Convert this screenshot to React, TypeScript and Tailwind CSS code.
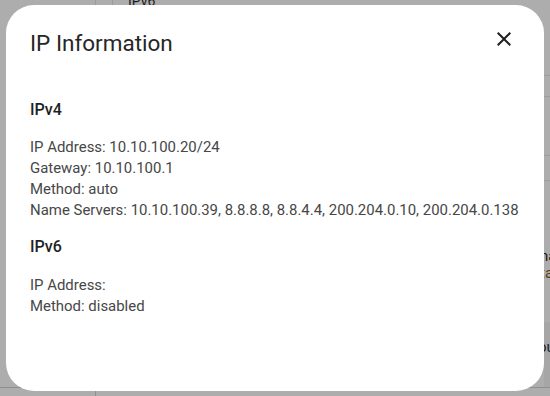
import React from "react";

const Line = ({ children }: { children: React.ReactNode }) => (
  <div className="whitespace-nowrap text-[14.95px] leading-[21px] text-[#474747]">{children}</div>
);

const Section = ({ title, lines, gap }: { title: string; lines: string[]; gap: string }) => (
  <div className="flex flex-col">
    <div className="text-[16px] leading-[24px] font-medium text-[#1f1f1f]">{title}</div>
    <div className={`flex flex-col ${gap}`}>
      {lines.map((l) => (
        <Line key={l}>{l}</Line>
      ))}
    </div>
  </div>
);

export default function App() {
  return (
    <div
      className="relative w-[550px] h-[396px] overflow-hidden bg-[#adadad] pt-[5px] pl-[6px]"
      style={{ fontFamily: "Roboto, 'Noto Sans', sans-serif" }}
    >
      {/* page behind the scrim */}
      <div className="absolute inset-0">
        <div className="absolute left-[95px] top-0 h-[14px] w-px bg-[#9a9a9a]" />
        <div className="absolute left-[112px] top-0 h-[14px] w-px bg-[#9a9a9a]" />
        <div className="absolute left-[128px] top-[-9px] text-[14px] text-[#1c1c1c]">IPv6</div>
        <div className="absolute left-[95px] top-[382px] h-[14px] w-px bg-[#8f8f8f]" />
        <div className="absolute left-[544px] top-[75px] h-px w-[6px] bg-[#9c9c9c]" />
        <div className="absolute left-[544px] top-[96px] h-px w-[6px] bg-[#9c9c9c]" />
        <div className="absolute left-[544px] top-[155px] h-px w-[6px] bg-[#9c9c9c]" />
        <div className="absolute left-[544px] top-[180px] h-px w-[6px] bg-[#9c9c9c]" />
        <div className="absolute left-[544px] top-[322px] h-[65px] w-[6px] bg-[#a6a6a6]" />
        <div className="absolute left-[540px] top-[247px] text-[15px] leading-[18px] text-[#1c1c1c]">na</div>
        <div className="absolute left-[540px] top-[264px] text-[15px] leading-[18px] text-[#5a3a10]">ta</div>
        <div className="absolute left-[538px] top-[338px] text-[15px] leading-[18px] text-[#1c1c1c]">ou</div>
        <div className="absolute left-0 top-[387px] h-px w-[550px] bg-[#8f8f8f]" />
      </div>

      <div className="relative flex flex-col w-[538px] h-[386px] rounded-[28px] bg-white pt-[22px] pl-[24px] pr-[24px]">
        <div className="flex items-start justify-between pr-[4px]">
          <div className="text-[22.5px] leading-[32px] text-[#262626]">IP Information</div>
          <button className="w-[24px] h-[24px] flex items-center justify-center text-[#1f1f1f]">
            <svg viewBox="0 0 24 24" width="24" height="24" fill="currentColor">
              <path d="M19 6.41L17.59 5 12 10.59 6.41 5 5 6.41 10.59 12 5 17.59 6.41 19 12 13.41 17.59 19 19 17.59 13.41 12z" />
            </svg>
          </button>
        </div>

        <div className="mt-[39px] flex flex-col gap-[14px]">
          <Section
            title="IPv4"
            gap="mt-[15px]"
            lines={[
              "IP Address: 10.10.100.20/24",
              "Gateway: 10.10.100.1",
              "Method: auto",
              "Name Servers: 10.10.100.39, 8.8.8.8, 8.8.4.4, 200.204.0.10, 200.204.0.138",
            ]}
          />
          <Section title="IPv6" gap="mt-[16px]" lines={["IP Address:", "Method: disabled"]} />
        </div>
      </div>
    </div>
  );
}
